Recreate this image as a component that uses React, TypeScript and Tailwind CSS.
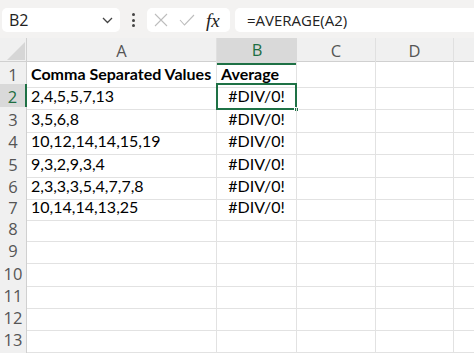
import React from 'react';

const rows: [string, string][] = [
  ['Comma Separated Values', 'Average'],
  ['2,4,5,5,7,13', '#DIV/0!'],
  ['3,5,6,8', '#DIV/0!'],
  ['10,12,14,14,15,19', '#DIV/0!'],
  ['9,3,2,9,3,4', '#DIV/0!'],
  ['2,3,3,3,5,4,7,7,8', '#DIV/0!'],
  ['10,14,14,13,25', '#DIV/0!'],
  ['', ''],
  ['', ''],
  ['', ''],
  ['', ''],
  ['', ''],
  ['', ''],
];

const heights = ['h-[22px]', 'h-[23px]', 'h-[22px]', 'h-[23px]', 'h-[22px]', 'h-[21px]', 'h-[22px]', 'h-[22px]', 'h-[23px]', 'h-[22px]', 'h-[22px]', 'h-[22px]', 'h-[24px]'];

const App: React.FC = () => {
  return (
    <div className="w-[474px] h-[354px] overflow-hidden bg-white font-['Lato',sans-serif]">
      {/* formula bar */}
      <div className="h-[38px] bg-[#f3f2f1] flex items-start pt-[8px] pl-[2px]">
        <div className="w-[118px] h-[24px] bg-white rounded-[5px] flex items-center justify-between pl-[7px] pr-[7px]">
          <span className="font-['Open_Sans',sans-serif] text-[16px] text-[#222]">B2</span>
          <svg width="11" height="7" viewBox="0 0 11 7" fill="none">
            <path d="M1 1l4.5 4.5L10 1" stroke="#444" strokeWidth="1.3" />
          </svg>
        </div>
        <div className="w-[27px] h-[24px] flex flex-col items-center justify-center gap-[2.5px]">
          <div className="w-[3px] h-[3px] rounded-full bg-[#444]" />
          <div className="w-[3px] h-[3px] rounded-full bg-[#444]" />
          <div className="w-[3px] h-[3px] rounded-full bg-[#444]" />
        </div>
        <div className="w-[83px] h-[24px] bg-white rounded-[5px] flex items-center pl-[7px]">
          <svg width="14" height="14" viewBox="0 0 14 14" fill="none">
            <path d="M1 1l12 12M13 1L1 13" stroke="#bdbdbd" strokeWidth="1.1" />
          </svg>
          <svg width="16" height="12" viewBox="0 0 16 12" fill="none" className="ml-[11px]">
            <path d="M1 6l4.5 5L15 1" stroke="#bdbdbd" strokeWidth="1.1" />
          </svg>
          <span className="ml-[11px] font-['Liberation_Serif',serif] italic text-[19px] text-[#222] leading-none">fx</span>
        </div>
        <div className="flex-1 ml-[5px] h-[24px] bg-white rounded-l-[5px] flex items-center pl-[12px]">
          <span className="font-['Open_Sans',sans-serif] text-[15px] text-[#222]">=AVERAGE(A2)</span>
        </div>
      </div>

      {/* column headers */}
      <div className="grid grid-cols-[27px_190px_80px_79px_78px_1fr] h-[24px] bg-[#f0f0f0] border-b border-[#d0d0d0] font-['Open_Sans',sans-serif] text-[16.5px] text-[#555]">
        <div className="relative border-r border-[#d0d0d0]">
          <svg width="18" height="18" viewBox="0 0 18 18" className="absolute left-[7px] top-[4px]">
            <path d="M18 0V18H0Z" fill="#d6d6d6" />
          </svg>
        </div>
        <div className="flex items-center justify-center border-r border-[#e0e0e0]">A</div>
        <div className="flex items-center justify-center bg-[#d9d9d9] text-[#1e6e42] border-b-2 border-[#1e7145] -mb-[1px]">B</div>
        <div className="flex items-center justify-center border-r border-[#e0e0e0]">C</div>
        <div className="flex items-center justify-center border-r border-[#e0e0e0]">D</div>
        <div />
      </div>

      {/* rows */}
      {rows.map((r, i) => (
        <div key={i} className={`grid grid-cols-[27px_190px_80px_79px_78px_1fr] ${heights[i]}`}>
          <div
            className={`flex items-center justify-center font-['Open_Sans',sans-serif] text-[16.5px] ${
              i === 1 ? 'bg-[#d9d9d9] text-[#1e6e42] border-r-2 border-[#1e7145]' : 'bg-[#f0f0f0] text-[#555] border-r border-[#d0d0d0]'
            }`}
          >
            {i + 1}
          </div>
          <div className={`flex items-end pl-[4px] pb-[1px] text-[16px] text-black border-r border-b border-[#e2e2e2] whitespace-nowrap ${i === 0 ? 'font-bold' : ''}`}>
            {r[0]}
          </div>
          <div
            className={`relative flex items-end pb-[1px] text-[16px] text-black whitespace-nowrap ${
              i === 0 ? 'font-bold pl-[4px] border-r border-b border-[#e2e2e2]' : 'justify-center border-r border-b border-[#e2e2e2]'
            }`}
          >
            {r[1]}
            {i === 1 && (
              <>
                <div className="absolute -left-[1px] -top-[1px] -right-[1px] -bottom-[1px] border-2 border-[#1e7145]" />
                <div className="absolute -right-[3px] -bottom-[3px] w-[5px] h-[5px] bg-[#1e7145] border border-white" />
              </>
            )}
          </div>
          <div className="border-r border-b border-[#e2e2e2]" />
          <div className="border-r border-b border-[#e2e2e2]" />
          <div className="border-b border-[#e2e2e2]" />
        </div>
      ))}
    </div>
  );
};

export default App;
